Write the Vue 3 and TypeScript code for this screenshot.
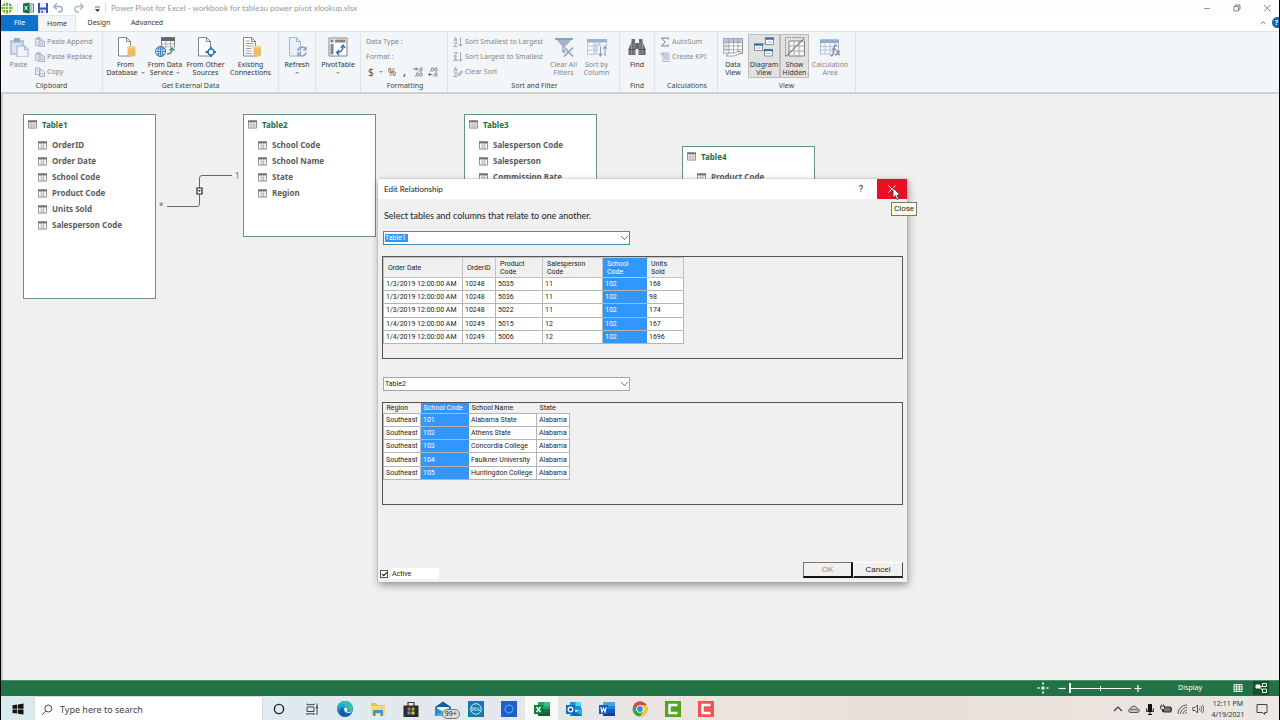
<script setup lang="ts">
import { ref } from 'vue'

interface BigButton {
  icon: string
  lines: string[]
  width: number
  menu?: boolean
  disabled?: boolean
  pressed?: boolean
}
interface DiagramTable {
  name: string
  x: number
  y: number
  height: number
  fields: string[]
}

const external: BigButton[] = [
  { icon: 'from-db', lines: ['From', 'Database'], width: 39, menu: true },
  { icon: 'from-service', lines: ['From Data', 'Service'], width: 40, menu: true },
  { icon: 'from-other', lines: ['From Other', 'Sources'], width: 41 },
  { icon: 'existing', lines: ['Existing', 'Connections'], width: 49 },
]
const views: BigButton[] = [
  { icon: 'data-view', lines: ['Data', 'View'], width: 30 },
  { icon: 'diagram-view', lines: ['Diagram', 'View'], width: 32, pressed: true },
  { icon: 'show-hidden', lines: ['Show', 'Hidden'], width: 29, pressed: true },
  { icon: 'calc-area', lines: ['Calculation', 'Area'], width: 42, disabled: true },
]
const clipboard = [
  { icon: 'paste-append', label: 'Paste Append' },
  { icon: 'paste-append', label: 'Paste Replace' },
  { icon: 'copy', label: 'Copy' },
]
const sorts = [
  { icon: 'sort-az', label: 'Sort Smallest to Largest' },
  { icon: 'sort-za', label: 'Sort Largest to Smallest' },
  { icon: 'clear-sort', label: 'Clear Sort' },
]

const diagram: DiagramTable[] = [
  { name: 'Table1', x: 22, y: 21, height: 185, fields: ['OrderID', 'Order Date', 'School Code', 'Product Code', 'Units Sold', 'Salesperson Code'] },
  { name: 'Table2', x: 242, y: 21, height: 123, fields: ['School Code', 'School Name', 'State', 'Region'] },
  { name: 'Table3', x: 463, y: 21, height: 123, fields: ['Salesperson Code', 'Salesperson', 'Commission Rate'] },
  { name: 'Table4', x: 681, y: 53, height: 123, fields: ['Product Code'] },
]

const orderCols = [
  { label: 'Order Date', width: 79 },
  { label: 'OrderID', width: 33 },
  { label: 'Product Code', width: 47 },
  { label: 'Salesperson Code', width: 60 },
  { label: 'School Code', width: 44 },
  { label: 'Units Sold', width: 37 },
]
const orderRows = [
  ['1/3/2019 12:00:00 AM', '10248', '5035', '11', '102', '168'],
  ['1/3/2019 12:00:00 AM', '10248', '5036', '11', '102', '98'],
  ['1/3/2019 12:00:00 AM', '10248', '5022', '11', '102', '174'],
  ['1/4/2019 12:00:00 AM', '10249', '5015', '12', '102', '167'],
  ['1/4/2019 12:00:00 AM', '10249', '5006', '12', '102', '1696'],
]
const schoolCols = [
  { label: 'Region', width: 37 },
  { label: 'School Code', width: 48 },
  { label: 'School Name', width: 68 },
  { label: 'State', width: 33 },
]
const schoolRows = [
  ['Southeast', '101', 'Alabama State', 'Alabama'],
  ['Southeast', '102', 'Athens State', 'Alabama'],
  ['Southeast', '103', 'Concordia College', 'Alabama'],
  ['Southeast', '104', 'Faulkner University', 'Alabama'],
  ['Southeast', '105', 'Huntingdon College', 'Alabama'],
]
const tableNames = ['Table1', 'Table2', 'Table3', 'Table4']
const apps = ['cortana', 'taskview', 'edge', 'explorer', 'store', 'mail', 'dell', 'ring', 'excel', 'outlook', 'word', 'chrome', 'camtasia', 'camrec']
const tray = ['chevron', 'cloud', 'mic', 'battery', 'wifi', 'speaker']

const leftTable = ref('Table1')
const rightTable = ref('Table2')
const active = ref(true)
const zoom = ref(0)
</script>

<template>
  <svg class="sprite" aria-hidden="true">
    <symbol id="paste" viewBox="0 0 20 20">
      <path d="M1 3h14v15H1z" fill="#b9c6da" /><path d="M5 1h6v4H5z" fill="#95a8c4" /><path d="M3 6h10v10H3z" fill="#dbe3ef" />
      <path d="M8 9h8l3 3v8H8z" fill="#f1f5fb" stroke="#9fb0cc" /><path d="M15.500 9v3.500H19" fill="none" stroke="#9fb0cc" />
    </symbol>
    <symbol id="paste-append" viewBox="0 0 10 10">
      <path d="M.5 1.500h6v7h-6zM2 .5h3v2H2z" fill="#dfe6f0" stroke="#a3b1c8" stroke-width=".8" />
      <path d="M4 4h5.500v5.500H4z" fill="#eef2f8" stroke="#8fa2c0" stroke-width=".8" /><path d="M5 6h3.500M5 7.700h3.500" stroke="#8fa2c0" stroke-width=".7" />
    </symbol>
    <symbol id="copy" viewBox="0 0 10 10">
      <path d="M.5 1h4.500v6.500H.5zM4.500 3h3l2 2v4.500h-5z" fill="#f2f5fa" stroke="#96a8c5" stroke-width=".9" />
      <path d="M5.500 6.500h3M5.500 8h3M1.500 3h2M1.500 4.800h2" stroke="#a8b7cf" stroke-width=".7" />
    </symbol>
    <symbol id="from-db" viewBox="0 0 20 20">
      <path d="M2.500.5h8l4 4v14.500h-12z" fill="#fff" stroke="#777" stroke-width=".9" /><path d="M10.500.5v4h4" fill="none" stroke="#777" stroke-width=".9" />
      <path d="M11.500 10v8c0 2.300 8 2.300 8 0v-8z" fill="#efbd60" /><ellipse cx="15.500" cy="10" rx="4" ry="1.600" fill="#f6d394" />
    </symbol>
    <symbol id="existing" viewBox="0 0 20 20">
      <path d="M2.500.5h8l4 4v14.500h-12z" fill="#fff" stroke="#777" stroke-width=".9" /><path d="M10.500.5v4h4" fill="none" stroke="#777" stroke-width=".9" />
      <path d="M4.500 4h4M4.500 6.500h8M4.500 9h8M4.500 11.500h6M4.500 14h6M4.500 16.500h6" stroke="#888" stroke-width=".8" />
      <path d="M12.500 10v8c0 2.300 7.500 2.300 7.500 0v-8z" fill="#efbd60" /><ellipse cx="16.200" cy="10" rx="3.700" ry="1.600" fill="#f6d394" />
    </symbol>
    <symbol id="from-service" viewBox="0 0 20 20">
      <path d="M6.500.5h13v12h-13z" fill="#fff" stroke="#777" stroke-width=".9" /><path d="M6 .5h14v3.500H6z" fill="#666" />
      <path d="M6 7h14M6 10h14M11 4v9M15.500 4v9" stroke="#999" stroke-width=".8" />
      <path d="M11 10.500h9v8h-9z" fill="#f3f6f8" />
      <circle cx="5.500" cy="14.500" r="5" fill="#e9f2fb" stroke="#2f73b5" /><path d="M.5 14.500h10M5.500 9.500v10M2 11.500c2 1 5 1 7 0M2 17.500c2-1 5-1 7 0" fill="none" stroke="#2f73b5" stroke-width=".8" /><ellipse cx="5.500" cy="14.500" rx="2.400" ry="5" fill="none" stroke="#2f73b5" stroke-width=".8" />
      <path d="M12 17c4 0 5-2 5-5M14.500 13.500l2.500-2.500 2.500 2.500" fill="none" stroke="#3f8d63" stroke-width="1.400" />
    </symbol>
    <symbol id="from-other" viewBox="0 0 20 20">
      <path d="M2.500.5h8l4 4v14.500h-12z" fill="#fff" stroke="#777" stroke-width=".9" /><path d="M10.500.5v4h4" fill="none" stroke="#777" stroke-width=".9" />
      <circle cx="15" cy="15" r="3" fill="#fff" stroke="#2f73b5" stroke-width="1.400" /><path d="M15 9.500v3M15 17.500v3M9.500 15h3M17.500 15h3" stroke="#2f73b5" stroke-width="1.800" />
    </symbol>
    <symbol id="refresh" viewBox="0 0 20 20">
      <path d="M2.500.5h7l4 4v14.500h-11z" fill="#eaf0f8" stroke="#9dafca" stroke-width=".9" /><path d="M9.500.5v4h4" fill="none" stroke="#9dafca" stroke-width=".9" />
      <path d="M11 14c0-4 6-5 7.500-2M19 15.500c-.5 4-6 4.500-7.500 1.500" fill="none" stroke="#92a6c6" stroke-width="1.800" /><path d="M19.800 9v4.500h-4.500zM10.200 20v-4.500h4.500z" fill="#92a6c6" />
    </symbol>
    <symbol id="pivot" viewBox="0 0 20 20">
      <path d="M1 1h18v18H1z" fill="#fff" stroke="#777" stroke-width=".9" /><path d="M2.500 2.500h3v3h-3zM7 2.500h10.500v3H7zM2.500 7h3v10.500h-3z" fill="#858585" />
      <path d="M9 15.500c4.500 0 6-2 6-6.500" fill="none" stroke="#2a6db0" stroke-width="1.400" /><path d="M12.800 10.800L15 8l2.200 2.800M11.200 13l-2.700 2.500 2.700 2.500" fill="none" stroke="#2a6db0" stroke-width="1.300" />
    </symbol>
    <symbol id="decimals-more" viewBox="0 0 10 10">
      <path d="M.5 2h4M3 .5L4.500 2 3 3.500" fill="none" stroke="#2f73b5" /><ellipse cx="8" cy="2.500" rx="1.100" ry="1.800" fill="none" stroke="#666" stroke-width=".8" /><ellipse cx="4.500" cy="7.500" rx="1.100" ry="1.800" fill="none" stroke="#666" stroke-width=".8" /><ellipse cx="8" cy="7.500" rx="1.100" ry="1.800" fill="none" stroke="#666" stroke-width=".8" /><path d="M5.500 3.500h.8v.9h-.8zM1.800 8.500h.8v.9h-.8z" fill="#555" />
    </symbol>
    <symbol id="decimals-less" viewBox="0 0 10 10">
      <path d="M.5 7.500h4M2 6L.5 7.500 2 9" fill="none" stroke="#2f73b5" /><ellipse cx="4.500" cy="2.500" rx="1.100" ry="1.800" fill="none" stroke="#666" stroke-width=".8" /><ellipse cx="8" cy="2.500" rx="1.100" ry="1.800" fill="none" stroke="#666" stroke-width=".8" /><ellipse cx="8" cy="7.500" rx="1.100" ry="1.800" fill="none" stroke="#666" stroke-width=".8" /><path d="M1.800 3.500h.8v.9h-.8zM5.500 8.500h.8v.9h-.8z" fill="#555" />
    </symbol>
    <symbol id="sort-az" viewBox="0 0 10 10">
      <path d="M.8 4.500L2.500.5l1.700 4M1.300 3.200h2.400M.8 6h3.400L.8 9.500h3.400" fill="none" stroke="#8d9bb2" stroke-width=".9" /><path d="M7.500.5v8.500M5.700 7.200l1.800 2 1.800-2" fill="none" stroke="#8d9bb2" stroke-width=".9" />
    </symbol>
    <symbol id="sort-za" viewBox="0 0 10 10">
      <path d="M.8 9.500l1.700-4 1.700 4M1.300 8.200h2.400M.8.700h3.400L.8 4.200h3.400" fill="none" stroke="#8d9bb2" stroke-width=".9" /><path d="M7.500.5v8.500M5.700 7.200l1.800 2 1.800-2" fill="none" stroke="#8d9bb2" stroke-width=".9" />
    </symbol>
    <symbol id="clear-sort" viewBox="0 0 10 10">
      <path d="M.8 4.500L2.500.5l1.700 4M1.300 3.200h2.400M.8 6h3.400L.8 9.500h3.400" fill="none" stroke="#8d9bb2" stroke-width=".9" /><path d="M4.500 8l3-3.500h2.300L7 8.500H4.500z" fill="#b7c5dd" stroke="#8fa2c2" stroke-width=".7" />
    </symbol>
    <symbol id="filter" viewBox="0 0 20 20">
      <path d="M1 1h18l-7 8v9l-4-3V9z" fill="#a3b1c9" /><path d="M1 1h18v2H1z" fill="#8e9fbb" /><path d="M10 10l9 9M19 10.500l-9 8.500" stroke="#eef2f7" stroke-width="3.500" /><path d="M10 10l9 9.500M19 10.500l-9 9" stroke="#94a5c2" stroke-width="1.600" />
    </symbol>
    <symbol id="sort-column" viewBox="0 0 20 20">
      <path d="M.5 2.500h19v15H.5z" fill="#f6f8fc" stroke="#b0bdd2" stroke-width=".8" /><path d="M0 2h20v3.500H0z" fill="#9db0cf" /><path d="M7 5.500h6v12H7z" fill="#d5deed" /><path d="M0 9h20M0 13h20M7 5v12M13 5v12" stroke="#b0bdd2" stroke-width=".8" />
      <path d="M11 9h9v11h-9z" fill="#f3f6f8" /><path d="M13.500 9.500v9M11.500 16.500l2 2.500 2-2.500M18 19v-9M16 12l2-2.500 2 2.500" fill="none" stroke="#8b9cb8" stroke-width="1.100" />
    </symbol>
    <symbol id="binoculars" viewBox="0 0 20 20">
      <path d="M4.500 2H8v4h4V2h3.500v3l3 7v6h-7v-6h-3v6h-7v-6l3-7z" fill="#6a6a6a" /><path d="M4.500 6v11M7 6v11M13 6v11M15.500 6v11" stroke="#a5a5a5" stroke-width=".8" /><path d="M1.500 12.500h7M11.500 12.500h7" stroke="#4d4d4d" />
    </symbol>
    <symbol id="sigma" viewBox="0 0 10 10"><path d="M8.300 2.500V1H1.500L5 5 1.500 9h6.800V7.500" fill="none" stroke="#7d7d7d" /></symbol>
    <symbol id="kpi" viewBox="0 0 10 10">
      <path d="M3 1h6v8.500H3z" fill="#eef2f9" stroke="#97a8c6" stroke-width=".8" /><path d="M4.200 3h3.600M4.200 5h3.600M4.200 7h3.600" stroke="#8298bd" stroke-width=".9" /><path d="M2.200 0v4.500M0 2.200h4.500M.7.700l3 3M3.700.7l-3 3" stroke="#aab8d0" stroke-width=".6" />
    </symbol>
    <symbol id="data-view" viewBox="0 0 20 20">
      <path d="M.5 1.500h19v15H.5z" fill="#fff" stroke="#777" stroke-width=".8" /><path d="M.5 1.500h19v4H.5z" fill="#b8c7de" /><path d="M.5 5.500H6v11H.5z" fill="#dce4ef" /><path d="M0 5.500h20M0 9h20M0 12.700h20M6 1v15M10.500 1v15M15 1v15" stroke="#909090" stroke-width=".7" />
      <path d="M3 19l3-3h6l2-1.500h4l-2 2.500-5 2z" fill="#fff" stroke="#888" stroke-width=".8" />
    </symbol>
    <symbol id="diagram-view" viewBox="0 0 20 20">
      <path d="M8 9L12 5M7 11l5 5" stroke="#777" stroke-width=".8" />
      <path d="M.5 7h8v6.500h-8zM11.500 1h8v6.500h-8zM10.500 12.500h8V19h-8z" fill="#fff" stroke="#777" stroke-width=".8" /><path d="M0 6.500h9v2.300H0zM11 .5h9v2.300h-9zM10 12h9v2.300h-9z" fill="#3572af" /><path d="M2 11h5M13 5h5M12 16.500h5" stroke="#999" stroke-width=".7" />
    </symbol>
    <symbol id="show-hidden" viewBox="0 0 20 20">
      <path d="M.5 19V.5H19" fill="none" stroke="#777" stroke-width=".9" stroke-dasharray="1.500 1" /><path d="M4 4h15.500v15H4z" fill="#fff" fill-opacity=".7" stroke="#777" stroke-width=".9" /><path d="M4 9h15M4 14h15M9 4v15M14 4v15" stroke="#999" stroke-width=".8" /><path d="M1 19.500L19.500 1" stroke="#555" />
    </symbol>
    <symbol id="calc-area" viewBox="0 0 20 20">
      <path d="M.5 3h18v14H.5z" fill="#f6f8fc" stroke="#a8b7d0" stroke-width=".9" /><path d="M0 2.500h19V6H0z" fill="#93abd0" /><path d="M.5 9.500h18M.5 13h18M5 3v14M10 3v14M14.500 3v14" stroke="#a8b7d0" stroke-width=".8" />
      <path d="M17 8.500c-2-1-2.700 0-3 2l-1 6c-.3 2-1.200 2.800-2.700 2M12 12h4M16 14c2-1 2 5 4.500 3.500M20.500 13.500l-5 5" fill="none" stroke="#7d8796" stroke-width="1.200" />
    </symbol>
    <symbol id="grid" viewBox="0 0 10 10">
      <path d="M.5 1h9v8h-9z" fill="#fff" stroke="#858585" /><path d="M0 .5h10v2.200H0z" fill="#747474" /><path d="M.5 4.800h9M.5 6.900h9M3.500 2v7M6.500 2v7" stroke="#a3a3a3" stroke-width=".8" />
    </symbol>
    <symbol id="column" viewBox="0 0 10 10">
      <path d="M.5 1h9v8h-9z" fill="#fff" stroke="#858585" /><path d="M0 .5h10v2.200H0z" fill="#747474" /><path d="M3.500 2v7M6.500 2v7" stroke="#909090" stroke-width=".8" /><path d="M4 5h2.500M4 7h2.500" stroke="#a3a3a3" stroke-width=".7" />
    </symbol>

    <symbol id="cortana" viewBox="0 0 16 16"><circle cx="8" cy="8" r="4.600" fill="none" stroke="#222" stroke-width="1.400" /></symbol>
    <symbol id="taskview" viewBox="0 0 16 16"><path d="M3 6h7v4.500H3zM3 4V2.500M10 4V2.500M3 3.700h7M3 12.800h7M3 12v2M10 12v2M13 2.500v3M13 8v6" fill="none" stroke="#333" stroke-width=".9" /><path d="M12 5.500h2v2h-2z" fill="#333" /></symbol>
    <symbol id="edge" viewBox="0 0 16 16">
      <circle cx="8" cy="8" r="8" fill="#1b7fd1" /><path d="M.3 6C1.500 1.500 5 0 8 0c5 0 8 3.500 8 7 0 3-2.500 4-5 3.500 1.500-2 0-5-3.500-5C4.500 5.500 2 6 .3 8z" fill="#35bfa8" /><path d="M.5 6C2 2.500 6 2 9 4c-4-.5-6 2-6 5-2-1-2.500-2-2.500-3z" fill="#23a4d8" /><path d="M6.500 7.500c-1 3 1.500 6.500 7.500 5-3 4-8 4-10.500 1.500C1.500 11.500 3 8 6.500 7.500z" fill="#1258a5" /><path d="M7 8c0-2 3.500-2 3.500.5 0 .7-.5 1.300-.5 1.700 0 .8 2.500 1.300 5 0-1.500 2.500-7.500 2.500-8-2.200z" fill="#e6f1f5" />
    </symbol>
    <symbol id="explorer" viewBox="0 0 16 16"><path d="M1 2h5l1.500 2H15v10H1z" fill="#f0bf4c" /><path d="M1 5h14v9H1z" fill="#fbd974" /><path d="M3 15V9h10v6h-2.500v-3h-5v3z" fill="#4591ca" /></symbol>
    <symbol id="store" viewBox="0 0 16 16"><path d="M5 5V1.500h6V5" fill="none" stroke="#333" stroke-width="1.200" /><path d="M.5 4.500h15V16H.5z" fill="#2b2b2b" /><path d="M4.500 6.500h3v3h-3z" fill="#ee5a35" /><path d="M8.500 6.500h3v3h-3z" fill="#7dba3a" /><path d="M4.500 10.500h3v3h-3z" fill="#35a3e4" /><path d="M8.500 10.500h3v3h-3z" fill="#f5bd33" /></symbol>
    <symbol id="mail" viewBox="0 0 16 16"><path d="M0 6l8-5.500L16 6v8.500H0z" fill="#155c9e" /><path d="M2 6h12v5H2z" fill="#e9f3fb" /><path d="M0 6l8 5 8-5v9H0z" fill="#2b8bd2" /><path d="M0 15l8-5 8 5z" fill="#44b0ee" /></symbol>
    <symbol id="dell" viewBox="0 0 16 16"><path d="M0 0h16v16H0z" fill="#147aaf" /><circle cx="8" cy="8" r="5.300" fill="none" stroke="#d8edf7" /><path d="M4 6.500v3h1L6 8 5 6.500zM8.300 6.500H6.800v3h1.500M6.800 8h1.200M9.200 6.500v3h1.200M11 6.500v3h1.200" fill="none" stroke="#d8edf7" stroke-width=".7" /></symbol>
    <symbol id="ring" viewBox="0 0 16 16"><path d="M0 0h16v16H0z" fill="#1f5fc6" /><circle cx="8" cy="8" r="3.800" fill="none" stroke="#39aaf2" stroke-width="1.300" /></symbol>
    <symbol id="excel" viewBox="0 0 16 16"><path d="M4 1h12v14H4z" fill="#21a366" /><path d="M4 8h12v7H4z" fill="#185c37" /><path d="M10 1h6v4h-6z" fill="#33c481" /><path d="M10 8h6v3.500h-6z" fill="#107c41" /><path d="M0 4h9v9H0z" fill="#107c41" /><path d="M2.500 6l4 5M6.500 6l-4 5" stroke="#fff" stroke-width="1.300" /></symbol>
    <symbol id="outlook" viewBox="0 0 16 16"><path d="M4 1h11v8H4z" fill="#1490df" /><path d="M9.500 1H15v4H9.500z" fill="#50d9ff" /><path d="M4 7l6 4 6-4v8H4z" fill="#28a8ea" /><path d="M4 15l6-4 6 4z" fill="#1267b4" /><path d="M0 4h9v9H0z" fill="#0f6cbd" /><circle cx="4.500" cy="8.500" r="2.300" fill="none" stroke="#fff" stroke-width="1.300" /></symbol>
    <symbol id="word" viewBox="0 0 16 16"><path d="M4 1h12v14H4z" fill="#2b7cd3" /><path d="M4 1h12v4H4z" fill="#41a5ee" /><path d="M4 8h12v7H4z" fill="#185abd" /><path d="M4 12h12v3H4z" fill="#103f91" /><path d="M0 4h9v9H0z" fill="#185abd" /><path d="M1.700 6l1.300 5 1.500-4L6 11l1.300-5" fill="none" stroke="#fff" stroke-width="1.100" /></symbol>
    <symbol id="chrome" viewBox="0 0 16 16"><circle cx="8" cy="8" r="7.500" fill="#2fa651" /><path d="M8 8L1.500 4.200A7.500 7.500 0 0 1 14.500 4.200H8z" fill="#e0463a" /><path d="M8 4.200h6.500A7.500 7.500 0 0 1 8 15.500L11.300 10z" fill="#f8c935" /><circle cx="8" cy="8" r="3.800" fill="#fff" /><circle cx="8" cy="8" r="2.900" fill="#4583ec" /></symbol>
    <symbol id="camtasia" viewBox="0 0 16 16"><path d="M0 0h16v16H0z" fill="#4fa51c" /><path d="M12.500 4H4.500v8h8" fill="none" stroke="#fff" stroke-width="2.400" /></symbol>
    <symbol id="camrec" viewBox="0 0 16 16"><path d="M0 0h16v16H0z" fill="#ed5651" /><path d="M12.500 4H4.500v8h8" fill="none" stroke="#fff" stroke-width="2.400" /></symbol>

    <symbol id="chevron" viewBox="0 0 12 12"><path d="M2 8l4-4 4 4" fill="none" stroke="#333" stroke-width="1.100" /></symbol>
    <symbol id="cloud" viewBox="0 0 12 12"><path d="M3 9.500C0 9.500 0 6 2.500 6 3 2.500 8 2 9 5.500c3 0 3 4 0 4z" fill="#c8c5c2" stroke="#444" stroke-width=".9" /><path d="M2.500 7.500c2-2 4-1 7 0" fill="none" stroke="#444" stroke-width=".8" /></symbol>
    <symbol id="mic" viewBox="0 0 12 12"><path d="M4 1h4v7H4z" fill="#111" /><path d="M2.700 5.500v3h6.600v-3M6 9v2.500M4 11.500h4" fill="none" stroke="#111" /></symbol>
    <symbol id="battery" viewBox="0 0 12 12"><path d="M3.500 4h7.500v5H3.500z" fill="#777" stroke="#222" stroke-width=".9" /><path d="M11 5.500h1v2h-1z" fill="#222" /><path d="M.5 3h4v2.500c0 1.500-4 1.500-4 0zM1.500 1.500V3M3.500 1.500V3M2.500 6.500V9" fill="#ddd" stroke="#222" stroke-width=".8" /></symbol>
    <symbol id="wifi" viewBox="0 0 12 12"><path d="M2 11c0-5 4-9 9-9M4.500 11c0-3.500 3-6.500 6.500-6.500M7 11c0-2 2-4 4-4M9.300 11c0-1 .8-1.700 1.700-1.700" fill="none" stroke="#444" stroke-width=".9" /></symbol>
    <symbol id="speaker" viewBox="0 0 12 12"><path d="M.8 4.500H3L5.500 2v8L3 7.500H.8z" fill="none" stroke="#333" stroke-width=".8" /><path d="M7 4.500c1 1 1 2 0 3M8.500 3c1.800 2 1.800 4 0 6M10 1.800c2.500 3 2.500 5.400 0 8.400" fill="none" stroke="#444" stroke-width=".8" /></symbol>
  </svg>

  <div class="window">
    <header class="titlebar">
      <div class="quick">
        <svg class="i12" viewBox="0 0 12 12"><circle cx="6" cy="6" r="5.600" fill="#78b82a" /><path d="M1 4.500h10M1 7.500h10M4.500 1v10M7.500 1v10" stroke="#fff" stroke-width=".9" /></svg>
        <span class="rule"></span>
        <svg class="i12" viewBox="0 0 12 12"><path d="M6 2h5.500v8H6z" fill="#fff" stroke="#1e7145" stroke-width=".8" /><path d="M7 4h3.500M7 6h3.500M7 8h3.500" stroke="#1e7145" stroke-width=".8" /><path d="M1 1.500L7.500.5v11L1 10.500z" fill="#1e7145" /><path d="M2.500 4l3 4M5.500 4l-3 4" stroke="#fff" /></svg>
        <button class="qb" aria-label="Save"><svg class="i12" viewBox="0 0 12 12"><path d="M1 1h10v10H1z" fill="#3d4fc0" /><path d="M3 1h6v4.500H3z" fill="#eef0fb" /><path d="M3 7.500h6V11H3z" fill="#dfe3f7" /><path d="M4.300 8.500h1.500V11H4.300z" fill="#3d4fc0" /></svg></button>
        <button class="qb" aria-label="Undo"><svg class="i12" viewBox="0 0 12 12"><path d="M2 4.500h5.500c3.500 0 3.500 5.500 0 5.500H6M4.800 1.500L1.800 4.500l3 3" fill="none" stroke="#9badc9" stroke-width="1.400" /></svg></button>
        <button class="qb redo" aria-label="Redo"><svg class="i12" viewBox="0 0 12 12"><path d="M10 4.500H4.500C1 4.500 1 10 4.500 10H6M7.200 1.500l3 3-3 3" fill="none" stroke="#a9b6cb" stroke-width="1.400" /></svg></button>
        <button class="qb more" aria-label="Customize toolbar"><svg class="i12" viewBox="0 0 12 12"><path d="M4 5h5M4.500 7.500h4L6.500 9.500z" stroke="#444" stroke-width=".8" fill="#444" /></svg></button>
        <span class="rule last"></span>
        <span class="doc">Power Pivot for Excel - workbook for tableau power pivot xlookup.xlsx</span>
      </div>
      <div class="controls">
        <button aria-label="Minimize"><svg class="i10" viewBox="0 0 10 10"><path d="M2 5.500h6" stroke="#999" /></svg></button>
        <button aria-label="Restore"><svg class="i10" viewBox="0 0 10 10"><path d="M2 3.500h4.500V8H2zM3.500 3.500V2H8v4.500H6.500" fill="none" stroke="#777" stroke-width=".9" /></svg></button>
        <button aria-label="Close window"><svg class="i10" viewBox="0 0 10 10"><path d="M2 2l6.500 6.500M8.500 2L2 8.500" stroke="#777" stroke-width=".9" /></svg></button>
      </div>
    </header>

    <nav class="tabs">
      <button class="tab file">File</button>
      <button class="tab current">Home</button>
      <button class="tab design">Design</button>
      <button class="tab advanced">Advanced</button>
      <span class="fill"></span>
      <button class="tool" aria-label="Collapse ribbon"><svg class="i10" viewBox="0 0 10 10"><path d="M2.500 6L5 3.800 7.500 6" fill="none" stroke="#777" /></svg></button>
      <button class="help" aria-label="Help">?</button>
    </nav>

    <section class="ribbon">
      <div class="group g-clip">
        <div class="body">
          <button class="big w29" disabled><svg><use href="#paste" /></svg><span>Paste</span></button>
          <div class="smalls">
            <button v-for="c in clipboard" :key="c.label" class="small" disabled><svg><use :href="'#' + c.icon" /></svg>{{ c.label }}</button>
          </div>
        </div>
        <div class="caption">Clipboard</div>
      </div>
      <div class="group g-ext">
        <div class="body">
          <button v-for="b in external" :key="b.icon" class="big" :style="{ width: b.width + 'px' }">
            <svg><use :href="'#' + b.icon" /></svg><span>{{ b.lines[0] }}</span><span>{{ b.lines[1] }}<i v-if="b.menu" class="drop"></i></span>
          </button>
        </div>
        <div class="caption">Get External Data</div>
      </div>
      <div class="group g-ref">
        <div class="body"><button class="big"><svg><use href="#refresh" /></svg><span>Refresh</span><span><i class="drop alone"></i></span></button></div>
      </div>
      <div class="group g-piv">
        <div class="body"><button class="big"><svg><use href="#pivot" /></svg><span>PivotTable</span><span><i class="drop alone"></i></span></button></div>
      </div>
      <div class="group g-fmt">
        <div class="body">
          <div class="smalls">
            <span class="small">Data Type :</span>
            <span class="small">Format :</span>
            <div class="formats">
              <button aria-label="Currency">$</button><i class="drop alone"></i>
              <button aria-label="Percent">%</button>
              <button class="comma" aria-label="Thousands separator">,</button>
              <button aria-label="Increase decimals"><svg class="i10"><use href="#decimals-more" /></svg></button>
              <button aria-label="Decrease decimals"><svg class="i10"><use href="#decimals-less" /></svg></button>
            </div>
          </div>
        </div>
        <div class="caption">Formatting</div>
      </div>
      <div class="group g-sort">
        <div class="body">
          <div class="smalls">
            <button v-for="s in sorts" :key="s.label" class="small" disabled><svg><use :href="'#' + s.icon" /></svg>{{ s.label }}</button>
          </div>
          <button class="big w33" disabled><svg><use href="#filter" /></svg><span>Clear All</span><span>Filters</span></button>
          <button class="big w33" disabled><svg><use href="#sort-column" /></svg><span>Sort by</span><span>Column</span></button>
        </div>
        <div class="caption">Sort and Filter</div>
      </div>
      <div class="group g-find">
        <div class="body"><button class="big"><svg><use href="#binoculars" /></svg><span>Find</span></button></div>
        <div class="caption">Find</div>
      </div>
      <div class="group g-calc">
        <div class="body">
          <div class="smalls">
            <button class="small" disabled><svg><use href="#sigma" /></svg>AutoSum</button>
            <button class="small" disabled><svg><use href="#kpi" /></svg>Create KPI</button>
          </div>
        </div>
        <div class="caption">Calculations</div>
      </div>
      <div class="group g-view">
        <div class="body">
          <button v-for="b in views" :key="b.icon" class="big" :class="{ pressed: b.pressed }" :disabled="b.disabled" :style="{ width: b.width + 'px' }">
            <svg><use :href="'#' + b.icon" /></svg><span>{{ b.lines[0] }}</span><span>{{ b.lines[1] }}</span>
          </button>
        </div>
        <div class="caption">View</div>
      </div>
    </section>

    <main class="canvas">
      <article v-for="t in diagram" :key="t.name" class="node" :style="{ left: t.x + 'px', top: t.y + 'px', height: t.height + 'px' }">
        <h2><svg><use href="#grid" /></svg>{{ t.name }}</h2>
        <ul>
          <li v-for="f in t.fields" :key="f"><svg><use href="#column" /></svg>{{ f }}</li>
        </ul>
      </article>
      <svg class="link" viewBox="0 0 84 40">
        <path d="M7 33.500h30q2.500 0 2.500-2.500V5q0-2.500 2.500-2.500h30" fill="none" stroke="#666" />
        <path d="M37 15h5v6h-5z" fill="#fff" stroke="#222" stroke-width="1.200" /><path d="M38 17h3l-1.500 2z" fill="#222" />
      </svg>
      <span class="end many">*</span>
      <span class="end one">1</span>

      <form class="dialog" role="dialog" aria-labelledby="dlg-title" @submit.prevent>
        <div class="dlg-bar">
          <span id="dlg-title">Edit Relationship</span>
          <button type="button" class="dlg-help" aria-label="Dialog help">?</button>
          <button type="button" class="dlg-close" aria-label="Close dialog"><svg class="i10" viewBox="0 0 10 10"><path d="M1.500 1.500l7 7M8.500 1.500l-7 7" stroke="#fff" /></svg></button>
        </div>
        <div class="dlg-body">
          <label class="intro" for="left-table">Select tables and columns that relate to one another.</label>
          <select id="left-table" v-model="leftTable" class="combo focused"><option v-for="n in tableNames" :key="n">{{ n }}</option></select>
          <div class="panel">
            <table class="data orders">
              <colgroup><col v-for="c in orderCols" :key="c.label" :style="{ width: c.width + 'px' }" /></colgroup>
              <thead><tr><th v-for="(c, i) in orderCols" :key="c.label" :class="{ sel: i === 4 }">{{ c.label }}</th></tr></thead>
              <tbody><tr v-for="(r, n) in orderRows" :key="n"><td v-for="(v, i) in r" :key="i" :class="{ sel: i === 4 }">{{ v }}</td></tr></tbody>
            </table>
          </div>
          <select id="right-table" v-model="rightTable" class="combo" aria-label="Related table"><option v-for="n in tableNames" :key="n">{{ n }}</option></select>
          <div class="panel">
            <table class="data schools">
              <colgroup><col v-for="c in schoolCols" :key="c.label" :style="{ width: c.width + 'px' }" /></colgroup>
              <thead><tr><th v-for="(c, i) in schoolCols" :key="c.label" :class="{ sel: i === 1 }">{{ c.label }}</th></tr></thead>
              <tbody><tr v-for="(r, n) in schoolRows" :key="n"><td v-for="(v, i) in r" :key="i" :class="{ sel: i === 1 }">{{ v }}</td></tr></tbody>
            </table>
          </div>
        </div>
        <div class="dlg-foot">
          <label class="check"><input v-model="active" type="checkbox" />Active</label>
          <div class="actions">
            <button type="submit" class="ok" disabled>OK</button>
            <button type="button">Cancel</button>
          </div>
        </div>
        <svg class="cursor" viewBox="0 0 9 14"><path d="M1 .8v10l2.300-2.200 1.700 4 1.700-.8L5 8h3.200z" fill="#fff" stroke="#333" stroke-width=".8" /></svg>
        <span class="tip" role="tooltip">Close</span>
      </form>
    </main>

    <footer class="status">
      <svg class="i12" viewBox="0 0 12 12"><path d="M4.500 4.500h3v3h-3z" fill="#fff" /><path d="M6 .5v2M6 9.500v2M.5 6h2M9.500 6h2" stroke="#fff" stroke-width="1.600" /></svg>
      <button class="minus" aria-label="Zoom out"><svg class="i10" viewBox="0 0 10 10"><path d="M1.500 5.500h7" stroke="#fff" stroke-width="1.200" /></svg></button>
      <input v-model="zoom" type="range" min="0" max="100" aria-label="Zoom" />
      <button aria-label="Zoom in"><svg class="i10" viewBox="0 0 10 10"><path d="M1.500 5.500h7M5 2v7" stroke="#fff" stroke-width="1.200" /></svg></button>
      <span class="display">Display</span>
      <button class="mode" aria-label="Grid mode"><svg class="i10" viewBox="0 0 10 10"><path d="M1 1.500h8v7H1zM1 3.800h8M1 6.200h8M3.700 1.500v7M6.400 1.500v7" fill="none" stroke="#fff" stroke-width=".9" /></svg></button>
      <button class="mode on" aria-label="Diagram mode"><svg class="i12" viewBox="0 0 12 12"><path d="M1 3h4v3H1z" fill="#fff" stroke="#fff" /><path d="M7.500 1.500h4v3h-4zM7.500 7h4v3.500h-4zM5 4.500h2.500M5 5.500l2.500 3" fill="none" stroke="#fff" stroke-width=".9" /></svg></button>
    </footer>

    <div class="taskbar">
      <button class="start" aria-label="Start"><svg class="i12" viewBox="0 0 12 12"><path d="M.5 2.200L5.300 1.500v4.200H.5zM6 1.400L11.500.6v5.100H6zM.5 6.400h4.800v4.200L.5 9.900zM6 6.400h5.500v5.100L6 10.700z" fill="#111" /></svg></button>
      <label class="search">
        <svg class="i12" viewBox="0 0 12 12"><circle cx="7.300" cy="4.500" r="3.500" fill="none" stroke="#333" stroke-width=".9" /><path d="M4.800 7L1 11" stroke="#333" stroke-width=".9" /></svg>
        <input type="text" placeholder="Type here to search" aria-label="Search" />
      </label>
      <div class="apps">
        <button v-for="a in apps" :key="a" :class="{ running: a === 'excel' }" :aria-label="a">
          <svg><use :href="'#' + a" /></svg><span v-if="a === 'mail'" class="badge">99+</span>
        </button>
      </div>
      <div class="tray">
        <svg v-for="t in tray" :key="t" class="i12"><use :href="'#' + t" /></svg>
      </div>
      <div class="clock"><span>12:11 PM</span><span>4/19/2021</span></div>
      <button class="notes" aria-label="Notifications"><svg class="i12" viewBox="0 0 12 12"><path d="M1 1.500h10v8H8.500v2L6.500 9.500H1z" fill="none" stroke="#333" stroke-width=".9" /></svg></button>
    </div>
  </div>
</template>

<style>
html, body { margin: 0; background: #000; }
</style>

<style scoped>
* { box-sizing: border-box; }
.sprite { position: absolute; width: 0; height: 0; }
svg { display: block; flex: none; }
button, input, select { font: inherit; color: inherit; margin: 0; padding: 0; border: 0; background: none; border-radius: 0; }
.i10 { width: 10px; height: 10px; }
.i12 { width: 12px; height: 12px; }
.window {
  display: flex; flex-direction: column; height: 100vh; margin: 0 1px; overflow: hidden;
  background: #fff; color: #333; font: 7px/8px "Noto Sans", "Open Sans", sans-serif;
}

.titlebar { display: flex; justify-content: space-between; height: 15px; background: #fdfefe; }
.quick { display: flex; align-items: center; }
.rule { width: 1px; height: 9px; margin: 0 4px; background: #ddd; }
.rule.last { margin: 0 5px 0 2px; }
.qb { width: 12px; margin-left: 3px; }
.redo { margin-left: 9px; }
.more { margin-left: 6px; }
.doc { color: #999; font-family: Lato, "Open Sans", sans-serif; font-size: 8px; }
.controls { display: flex; }
.controls button { display: flex; align-items: center; justify-content: center; width: 30px; padding-left: 6px; }

.tabs { display: flex; height: 16px; align-items: stretch; }
.tab { width: 38px; }
.file { width: 37px; background: #0d72cc; color: #fff; }
.current { background: #f3f6f8; border: 1px solid #e2e4e6; border-bottom: 0; }
.design { width: 46px; }
.advanced { width: 50px; }
.fill { flex: 1; }
.tool { display: flex; align-items: center; width: 14px; }
.help { width: 7px; height: 11px; margin-top: 2px; padding-left: 2px; border-radius: 6px 0 0 6px; background: #1565b8; color: #fff; font-weight: 700; overflow: hidden; }

.ribbon { display: flex; height: 62px; background: #f3f6f8; border-top: 1px solid #dfe2e4; border-bottom: 1px solid #d3d6d8; }
.group { display: flex; flex-direction: column; padding: 2px 3px 0; border-right: 1px solid #e1e4e6; }
.body { display: flex; height: 46px; }
.caption { line-height: 12px; text-align: center; color: #444; }
.g-clip { width: 102px; }
.g-ext { width: 176px; }
.g-ref { width: 37px; }
.g-piv { width: 45px; }
.g-fmt { width: 87px; padding-left: 5px; }
.g-sort { width: 172px; padding-left: 5px; }
.g-find { width: 35px; }
.g-calc { width: 63px; padding-left: 5px; }
.g-view { width: 138px; padding: 2px 0 0; }
.big { display: flex; flex-direction: column; align-items: center; flex: none; height: 44px; padding-top: 3px; white-space: nowrap; }
.g-ref .big, .g-piv .big, .g-find .big { width: 100%; }
.big svg { width: 20px; height: 20px; margin-bottom: 4px; }
.w29 { width: 29px; }
.w33 { width: 33px; }
.big:disabled, .small { color: #858585; }
.pressed { background: #e1e1e1; box-shadow: inset 0 0 0 1px #bdbdbd; }
.drop { display: inline-block; margin-left: 3px; vertical-align: 1px; border: solid transparent; border-width: 2px 2px 0; border-top-color: #999; }
.drop.alone { margin-left: 0; }
.smalls { display: flex; flex-direction: column; margin-left: 2px; }
.g-fmt .smalls, .g-sort .smalls, .g-calc .smalls { margin-left: 0; }
.g-sort .smalls { width: 94px; }
.small { display: flex; align-items: center; gap: 2px; height: 15px; white-space: nowrap; }
.small svg { width: 10px; height: 10px; }
.formats { display: flex; align-items: center; gap: 5px; height: 15px; padding-left: 2px; font-size: 10px; color: #555; }
.comma { width: 7px; font-weight: 700; }

.canvas { position: relative; flex: 1; min-height: 0; background: #f0f0f0; box-shadow: inset 2px 1px 0 #c9ccca; }
.node { position: absolute; width: 133px; padding: 5px 0 0 4px; background: #fff; border: 1px solid #66967f; font-size: 8px; font-weight: 700; color: #5c5c5c; overflow: hidden; }
.node h2 { display: flex; align-items: center; gap: 5px; margin: 0 0 8px; font-size: 8px; line-height: 9px; color: #217346; }
.node svg { width: 9px; height: 9px; }
.node ul { margin: 0; padding: 0 0 0 10px; list-style: none; }
.node li { display: flex; align-items: center; gap: 5px; height: 16px; white-space: nowrap; }
.link { position: absolute; left: 159px; top: 80px; width: 84px; height: 40px; }
.end { position: absolute; font-size: 8px; color: #666; }
.many { left: 158px; top: 109px; }
.one { left: 234px; top: 79px; }

.dialog { position: absolute; left: 377px; top: 86px; width: 529px; background: #f0f0f0; box-shadow: 0 0 1px #999, 1px 3px 8px rgba(0, 0, 0, .4); font-family: Roboto, "Liberation Sans", sans-serif; color: #222; }
.dlg-bar { display: flex; height: 20px; background: #fff; }
#dlg-title { flex: 1; padding-left: 6px; font: 8px/20px Lato, "Open Sans", sans-serif; }
.dlg-help { width: 32px; font-size: 9px; }
.dlg-close { display: flex; align-items: center; justify-content: center; width: 30px; background: #e81123; }
.dlg-body { display: flex; flex-direction: column; padding: 0 4px; }
.intro { margin: 11px 2px 9px; font: 9px/12px Lato, Roboto, sans-serif; }
.combo {
  appearance: none; width: 247px; height: 14px; margin-left: 1px; padding: 0 1px; border: 1px solid #a5a5a5; line-height: 12px;
  background:
    conic-gradient(from 315deg at 50% 70%, #fff 90deg, transparent 0) no-repeat 237px 4px / 7px 4px,
    conic-gradient(from 315deg at 50% 100%, #777 90deg, transparent 0) no-repeat 237px 4px / 7px 4px, #fff;
}
.focused {
  border-color: #3c8fb8; color: #fff;
  background:
    linear-gradient(#3297fd, #3297fd) no-repeat 1px 2px / 23px 8px,
    conic-gradient(from 315deg at 50% 70%, #fff 90deg, transparent 0) no-repeat 237px 4px / 7px 4px,
    conic-gradient(from 315deg at 50% 100%, #777 90deg, transparent 0) no-repeat 237px 4px / 7px 4px, #fff;
}
.combo option { color: #222; }
.panel { height: 103px; margin: 11px 0 18px; border: 1px solid #555; }
.data { table-layout: fixed; border-collapse: collapse; }
.orders { width: 300px; height: 87px; }
.schools { width: 186px; height: 77px; }
.data th { padding: 0 4px; text-align: left; font-weight: 400; line-height: 8px; }
.orders th { height: 20px; border: 1px solid #c3c3c3; }
.schools th { height: 10px; padding: 0 3px; }
.data td { padding: 0 2px; background: #fff; border: 1px solid #b5b5b5; white-space: nowrap; }
.data .sel { background: #3297fd; color: #fff; border-left-color: #3297fd; border-right-color: #3297fd; }
.dlg-foot { display: flex; align-items: flex-start; justify-content: space-between; height: 59px; padding: 39px 4px 0 2px; }
.check { display: flex; align-items: center; gap: 4px; width: 59px; height: 11px; margin-top: 6px; background: #fff; box-shadow: inset 11px 0 0 #f0f0f0; }
.check input { appearance: none; width: 8px; height: 8px; border: 1px solid #555; background: #fff; position: relative; }
.check input:checked::after { content: ""; position: absolute; left: 2px; top: 0; width: 2px; height: 4px; border: solid #111; border-width: 0 1px 1px 0; transform: rotate(45deg); }
.actions { display: flex; font-family: "Liberation Sans", Arial, sans-serif; font-size: 8px; }
.actions button { width: 50px; height: 16px; border: 1px solid #fff; border-right-color: #444; border-bottom: 2px solid #222; }
.actions .ok { border: 1px solid #777; border-right: 2px solid #111; border-bottom: 2px solid #111; color: #888; }
.cursor { position: absolute; left: 514px; top: 8px; width: 9px; height: 14px; }
.tip { position: absolute; left: 513px; top: 23px; padding: 1px 2px; border: 1px solid #777; background: #ffffe5; line-height: 10px; font-size: 8px; }

.status { display: flex; align-items: center; justify-content: flex-end; height: 16px; padding: 0 10px 1px 0; background: #217346; color: #fff; border-top: 1px solid #4a9069; }
.status .minus { margin: 0 2px 0 8px; }
.status input { appearance: none; width: 62px; height: 10px; margin-right: 2px; background: linear-gradient(#fff, #fff) no-repeat center / 100% 1px, linear-gradient(#fff, #fff) no-repeat center / 1px 5px; }
.status input::-webkit-slider-thumb { appearance: none; width: 2px; height: 10px; background: #fff; }
.display { margin: 0 28px 0 35px; }
.mode { display: flex; align-items: center; justify-content: center; width: 16px; height: 14px; }
.on { margin-left: 7px; background: #17502f; }

.taskbar { display: flex; align-items: stretch; height: 24px; background: linear-gradient(90deg, #d9eaee 0, #deebef 20%, #e3e9ee 36%, #eee3dd 58%, #e9dfd9 70%, #ebe7e2 100%); }
.start { display: flex; align-items: center; justify-content: center; width: 33px; padding-top: 2px; }
.search { display: flex; align-items: center; width: 229px; padding: 2px 0 0 6px; gap: 7px; background: #fff; border: 1px solid #d5dcde; border-bottom: 0; font-size: 9px; }
.search input { flex: 1; height: 14px; outline: 0; }
.search input::placeholder { color: #444; opacity: 1; }
.apps { display: flex; width: 459px; }
.apps button { position: relative; display: flex; flex: 1; align-items: center; justify-content: center; padding-top: 2px; }
.apps svg { width: 16px; height: 16px; }
.running { background: #f8fafa; }
.badge { position: absolute; right: 0; bottom: 1px; padding: 0 2px; border: 1px solid #777; border-radius: 6px; background: #ddd; color: #222; line-height: 8px; }
.tray { display: flex; align-items: center; gap: 4px; margin-left: auto; padding-top: 2px; }
.clock { display: flex; flex-direction: column; justify-content: center; width: 48px; margin-right: 4px; padding-top: 1px; text-align: center; line-height: 11px; }
.notes { display: flex; align-items: center; width: 23px; padding-top: 2px; }
</style>
